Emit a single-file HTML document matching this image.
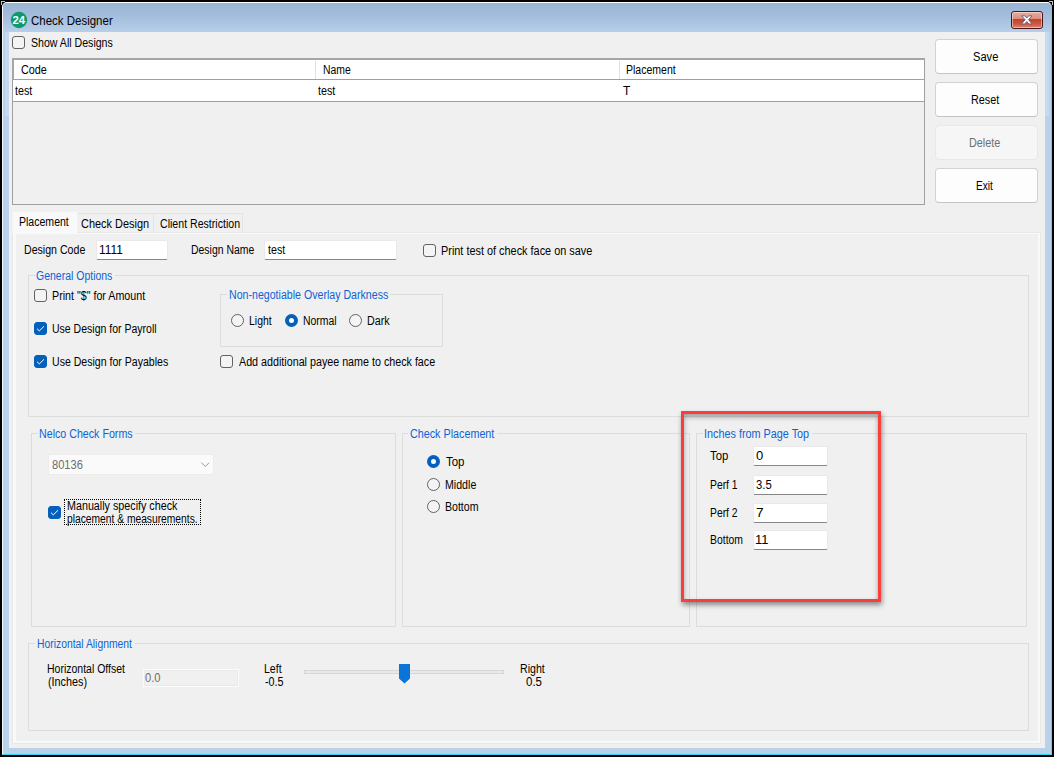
<!DOCTYPE html>
<html><head><meta charset="utf-8"><title>Check Designer</title>
<style>
*{box-sizing:border-box;margin:0;padding:0}
html,body{width:1054px;height:757px;overflow:hidden;background:#000}
body{position:relative;font-family:"Liberation Sans",sans-serif;font-size:12.5px;color:#000}
.a{position:absolute}
.t{position:absolute;white-space:nowrap;transform-origin:0 0;line-height:14px;height:14px}
.blue{color:#0f62d6}
.gry{color:#6d6d6d}
.dis{color:#707070}
.win{left:2px;top:2px;width:1050px;height:753px;background:#b9d1ea;border-top:1px solid #fff;border-left:1px solid #f4f8fc;border-right:1px solid #4ad8fb;border-bottom:1px solid #35d2ee;border-radius:5px 5px 0 0}
.title{left:3px;top:3px;width:1048px;height:29px;border-radius:4px 4px 0 0;background:linear-gradient(#9ab4d4,#a3bddc 45%,#b7cfe9)}
.client{left:9px;top:32px;width:1036px;height:716px;background:#f0f0f0}
.btn{width:103px;height:35px;left:935px;background:#fdfdfd;border:1px solid #d2d2d2;border-bottom-color:#c4c4c4;border-radius:4px}
.btn.off{background:#f6f6f6;border-color:#e8e8e8}
.cb{width:13px;height:13px;border:1px solid #626262;border-radius:3px;background:#f4f4f4}
.cb.on{background:#0560bc;border-color:#0560bc}
.cb.on svg{position:absolute;left:-1px;top:-1px}
.rb{width:13px;height:13px;border:1px solid #626262;border-radius:50%;background:#f4f4f4}
.rb.on{border:4px solid #0560bc;background:#fff}
.tb{background:#fff;border:1px solid #e9e9e9;border-bottom:1px solid #868686;border-radius:2px}
.gb{border:1px solid #dcdcdc}
.gl{background:#f0f0f0;height:3px}
</style></head><body>
<div class="a" style="left:1px;top:1px;width:4px;height:4px;border-top:1px solid #c4c4c4;border-left:1px solid #c4c4c4"></div>
<div class="a" style="left:1049px;top:1px;width:4px;height:4px;border-top:1px solid #c4c4c4;border-right:1px solid #c4c4c4"></div>
<div class="a win"></div>
<div class="a title"></div>
<!-- app icon -->
<svg class="a" style="left:10px;top:11px" width="18" height="18" viewBox="0 0 18 18"><circle cx="9" cy="9" r="8.2" fill="#0e9a6e"/><text x="8.8" y="13.2" text-anchor="middle" font-family="Liberation Sans,sans-serif" font-weight="bold" font-size="11.5" fill="#fff" textLength="12.6" lengthAdjust="spacingAndGlyphs">24</text></svg>
<!-- close -->
<div class="a" style="left:1011px;top:11px;width:32px;height:18px;border:1px solid #4a1720;border-radius:3px;background:linear-gradient(#e8ac9f 0%,#dc8d7c 45%,#c4402a 46%,#cc5a42 75%,#d98570 100%);box-shadow:inset 0 0 0 1px rgba(255,255,255,.45)"></div>
<svg class="a" style="left:1020px;top:14px" width="14" height="12" viewBox="0 0 14 12"><path d="M1.6 1.8h3.3l1.9 2.2 1.9-2.2h3.3l-3.5 3.9 3.6 4.2H8.8L6.8 7.6 4.8 9.9H1.5l3.6-4.2z" fill="#fff" stroke="#5a5f78" stroke-width=".9" stroke-linejoin="round"/></svg>
<div class="a" style="left:5px;top:32px;width:4px;height:84px;background:#c6daef"></div>
<div class="a" style="left:1045px;top:32px;width:4px;height:84px;background:#c6daef"></div>
<div class="a client"></div>
<!-- show all cb -->
<div class="a cb" style="left:12px;top:36px"></div>
<!-- list -->
<div class="a" style="left:12px;top:58px;width:913px;height:147px;border:1px solid #a0a0a0;background:#f0f0f0"></div>
<div class="a" style="left:12px;top:58px;width:913px;height:22px;background:#fff;border-top:2px solid #a6a6a6;border-left:2px solid #a6a6a6;border-right:1px solid #a0a0a0;border-bottom:1px solid #a0a0a0"></div>
<div class="a" style="left:13px;top:80px;width:911px;height:22px;background:#fff;border-bottom:1px solid #a0a0a0"></div>
<div class="a" style="left:315px;top:61px;width:1px;height:18px;background:#e0e0e0"></div>
<div class="a" style="left:619px;top:61px;width:1px;height:18px;background:#e0e0e0"></div>
<!-- buttons -->
<div class="a btn" style="top:39px"></div>
<div class="a btn" style="top:82px"></div>
<div class="a btn off" style="top:125px"></div>
<div class="a btn" style="top:168px"></div>
<!-- tabs -->
<div class="a" style="left:12px;top:232px;width:1029px;height:512px;background:#f9f9f9;border:1px solid #e8e8e8"></div>
<div class="a" style="left:16px;top:234px;width:1022px;height:507px;background:#f0f0f0"></div>
<div class="a" style="left:77px;top:213px;width:77px;height:20px;border:1px solid #e4e4e4;border-bottom:none"></div>
<div class="a" style="left:153px;top:213px;width:90px;height:20px;border:1px solid #e4e4e4;border-bottom:none"></div>
<div class="a" style="left:12px;top:211px;width:66px;height:23px;background:#f9f9f9;border:1px solid #f2f2f2;border-bottom:none"></div>
<!-- design code row -->
<div class="a tb" style="left:96px;top:240px;width:72px;height:20px"></div>
<div class="a tb" style="left:264px;top:240px;width:133px;height:20px"></div>
<div class="a cb" style="left:423px;top:244px"></div>
<!-- general options -->
<div class="a gb" style="left:28px;top:275px;width:1001px;height:142px"></div>
<div class="a gl" style="left:35px;top:274px;width:80px"></div>
<div class="a cb" style="left:34px;top:289px"></div>
<div class="a cb on" style="left:34px;top:322px"><svg width="13" height="13" viewBox="0 0 13 13"><path d="M3 6.7L5.3 8.9 10 4.3" fill="none" stroke="#fff" stroke-width="1"/></svg></div>
<div class="a cb on" style="left:34px;top:355px"><svg width="13" height="13" viewBox="0 0 13 13"><path d="M3 6.7L5.3 8.9 10 4.3" fill="none" stroke="#fff" stroke-width="1"/></svg></div>
<div class="a gb" style="left:220px;top:294px;width:223px;height:53px"></div>
<div class="a gl" style="left:227px;top:293px;width:163px"></div>
<div class="a rb" style="left:231px;top:314px"></div>
<div class="a rb on" style="left:285px;top:314px"></div>
<div class="a rb" style="left:349px;top:314px"></div>
<div class="a cb" style="left:220px;top:355px"></div>
<!-- nelco -->
<div class="a gb" style="left:31px;top:433px;width:365px;height:194px"></div>
<div class="a gl" style="left:38px;top:432px;width:97px"></div>
<div class="a" style="left:48px;top:454px;width:166px;height:21px;background:#fafafa;border:1px solid #ececec"></div>
<svg class="a" style="left:200px;top:461px" width="11" height="7" viewBox="0 0 11 7"><path d="M1.4 1.6l3.9 3.9 3.9-3.9" fill="none" stroke="#9a9a9a" stroke-width="1"/></svg>
<div class="a cb on" style="left:48px;top:506px"><svg width="13" height="13" viewBox="0 0 13 13"><path d="M3 6.7L5.3 8.9 10 4.3" fill="none" stroke="#fff" stroke-width="1"/></svg></div>
<div class="a" style="left:64px;top:499px;width:137px;height:26px;border:1px dotted #000"></div>
<!-- check placement -->
<div class="a gb" style="left:402px;top:433px;width:288px;height:194px"></div>
<div class="a gl" style="left:408px;top:432px;width:89px"></div>
<div class="a rb on" style="left:427px;top:455px"></div>
<div class="a rb" style="left:427px;top:478px"></div>
<div class="a rb" style="left:427px;top:500px"></div>
<!-- inches -->
<div class="a gb" style="left:696px;top:433px;width:331px;height:194px"></div>
<div class="a gl" style="left:703px;top:432px;width:109px"></div>
<div class="a tb" style="left:753px;top:446px;width:75px;height:20px"></div>
<div class="a tb" style="left:753px;top:475px;width:75px;height:20px"></div>
<div class="a tb" style="left:753px;top:503px;width:75px;height:20px"></div>
<div class="a tb" style="left:753px;top:530px;width:75px;height:20px"></div>
<!-- horizontal -->
<div class="a gb" style="left:28px;top:643px;width:1001px;height:88px"></div>
<div class="a gl" style="left:35px;top:642px;width:100px"></div>
<div class="a" style="left:143px;top:669px;width:96px;height:18px;background:#f0f0f0;border:1px solid #fbfbfb;box-shadow:inset 0 0 0 1px #e9e9e9"></div>
<div class="a" style="left:304px;top:670px;width:200px;height:4px;background:#e7eaea;border:1px solid #d6d6d6"></div>
<svg class="a" style="left:399px;top:664px" width="11" height="20" viewBox="0 0 11 20"><path d="M0 0h11v14.5L5.5 19.5 0 14.5z" fill="#0a74d9"/></svg>
<div class="t" style="left:31.43px;top:14px;transform:scaleX(0.957);font-size:12px">Check Designer</div>
<div class="t" style="left:30.52px;top:36px;transform:scaleX(0.847)">Show All Designs</div>
<div class="t" style="left:21.06px;top:63px;transform:scaleX(0.866)">Code</div>
<div class="t" style="left:322.67px;top:63px;transform:scaleX(0.833)">Name</div>
<div class="t" style="left:626.36px;top:63px;transform:scaleX(0.841)">Placement</div>
<div class="t" style="left:14.84px;top:84px;transform:scaleX(0.858)">test</div>
<div class="t" style="left:318.04px;top:84px;transform:scaleX(0.858)">test</div>
<div class="t" style="left:622.96px;top:84px;transform:scaleX(0.954)">T</div>
<div class="t" style="left:972.50px;top:50px;transform:scaleX(0.890)">Save</div>
<div class="t" style="left:971.03px;top:93px;transform:scaleX(0.867)">Reset</div>
<div class="t dis" style="left:969.33px;top:136px;transform:scaleX(0.867)">Delete</div>
<div class="t" style="left:976.39px;top:179px;transform:scaleX(0.813)">Exit</div>
<div class="t" style="left:19.46px;top:215px;transform:scaleX(0.843)">Placement</div>
<div class="t" style="left:80.95px;top:217px;transform:scaleX(0.875)">Check Design</div>
<div class="t" style="left:159.97px;top:217px;transform:scaleX(0.847)">Client Restriction</div>
<div class="t" style="left:24.15px;top:243px;transform:scaleX(0.848)">Design Code</div>
<div class="t" style="left:98.61px;top:243px;transform:scaleX(0.949)">1111</div>
<div class="t" style="left:190.86px;top:243px;transform:scaleX(0.835)">Design Name</div>
<div class="t" style="left:267.84px;top:243px;transform:scaleX(0.853)">test</div>
<div class="t" style="left:441.43px;top:244px;transform:scaleX(0.871)">Print test of check face on save</div>
<div class="t blue" style="left:36.38px;top:269px;transform:scaleX(0.839)">General Options</div>
<div class="t" style="left:52.35px;top:289px;transform:scaleX(0.855)">Print "$" for Amount</div>
<div class="t" style="left:52.41px;top:322px;transform:scaleX(0.841)">Use Design for Payroll</div>
<div class="t" style="left:52.41px;top:355px;transform:scaleX(0.845)">Use Design for Payables</div>
<div class="t blue" style="left:228.75px;top:288px;transform:scaleX(0.849)">Non-negotiable Overlay Darkness</div>
<div class="t" style="left:249.36px;top:314px;transform:scaleX(0.836)">Light</div>
<div class="t" style="left:303.27px;top:314px;transform:scaleX(0.834)">Normal</div>
<div class="t" style="left:367.24px;top:314px;transform:scaleX(0.860)">Dark</div>
<div class="t" style="left:239.40px;top:355px;transform:scaleX(0.858)">Add additional payee name to check face</div>
<div class="t blue" style="left:39.25px;top:427px;transform:scaleX(0.853)">Nelco Check Forms</div>
<div class="t gry" style="left:51.56px;top:458px;transform:scaleX(0.889)">80136</div>
<div class="t" style="left:66.54px;top:499px;transform:scaleX(0.859)">Manually specify check</div>
<div class="t" style="left:66.78px;top:512px;transform:scaleX(0.821)">placement &amp; measurements.</div>
<div class="t blue" style="left:410.06px;top:427px;transform:scaleX(0.861)">Check Placement</div>
<div class="t" style="left:445.77px;top:455px;transform:scaleX(0.918)">Top</div>
<div class="t" style="left:445.15px;top:478px;transform:scaleX(0.850)">Middle</div>
<div class="t" style="left:445.15px;top:500px;transform:scaleX(0.846)">Bottom</div>
<div class="t blue" style="left:704.33px;top:427px;transform:scaleX(0.866)">Inches from Page Top</div>
<div class="t" style="left:710.47px;top:449px;transform:scaleX(0.908)">Top</div>
<div class="t" style="left:709.87px;top:478px;transform:scaleX(0.828)">Perf 1</div>
<div class="t" style="left:709.87px;top:506px;transform:scaleX(0.828)">Perf 2</div>
<div class="t" style="left:709.87px;top:533px;transform:scaleX(0.833)">Bottom</div>
<div class="t" style="left:755.75px;top:449px;transform:scaleX(1.039)">0</div>
<div class="t" style="left:755.81px;top:478px;transform:scaleX(0.901)">3.5</div>
<div class="t" style="left:755.52px;top:506px;transform:scaleX(1.096)">7</div>
<div class="t" style="left:755.23px;top:533px;transform:scaleX(1.030)">11</div>
<div class="t blue" style="left:36.57px;top:637px;transform:scaleX(0.828)">Horizontal Alignment</div>
<div class="t" style="left:47.36px;top:662px;transform:scaleX(0.840)">Horizontal Offset</div>
<div class="t" style="left:47.55px;top:675px;transform:scaleX(0.863)">(Inches)</div>
<div class="t gry" style="left:144.91px;top:671px;transform:scaleX(0.892)">0.0</div>
<div class="t" style="left:264.46px;top:662px;transform:scaleX(0.843)">Left</div>
<div class="t" style="left:264.87px;top:675px;transform:scaleX(0.862)">-0.5</div>
<div class="t" style="left:520.25px;top:662px;transform:scaleX(0.849)">Right</div>
<div class="t" style="left:526.10px;top:675px;transform:scaleX(0.919)">0.5</div>
<!-- red highlight -->
<div class="a" style="left:681px;top:411px;width:200px;height:191px;border:3px solid #fb3d3d;box-shadow:1px 3px 5px rgba(0,0,0,.42),inset 0 3px 5px rgba(0,0,0,.34)"></div>
</body></html>
